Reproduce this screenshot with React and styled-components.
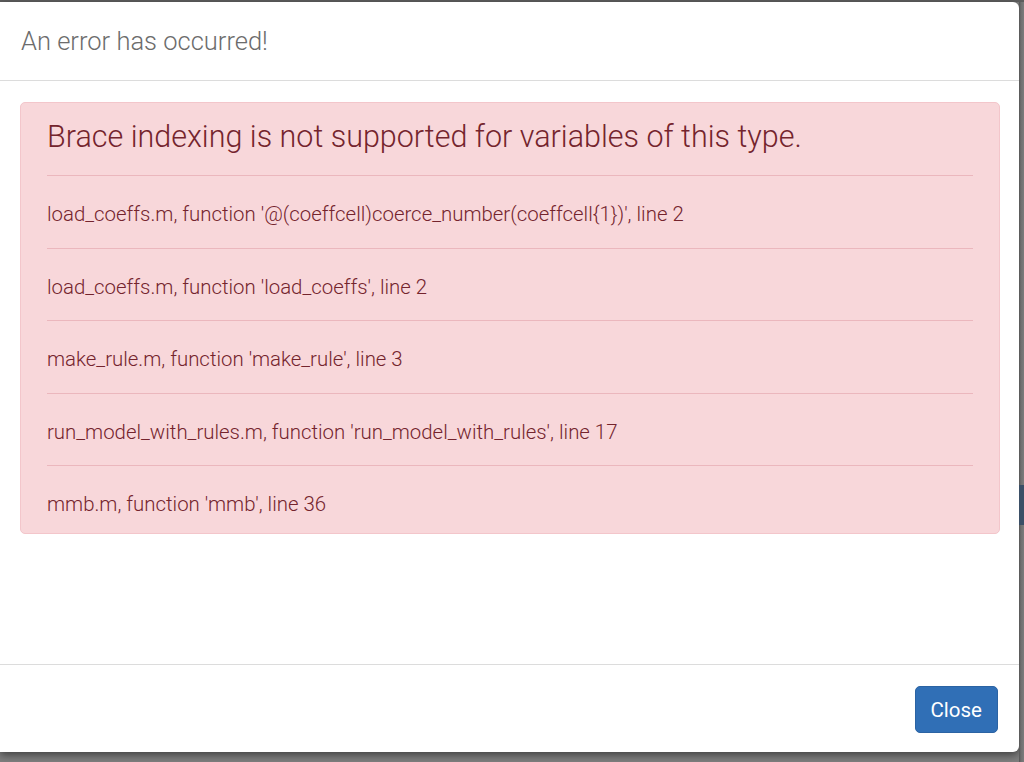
import React from 'react';
import styled, { createGlobalStyle } from 'styled-components';

const GlobalStyle = createGlobalStyle`
  html, body {
    margin: 0;
    padding: 0;
    background: #7f7f7f;
    font-family: Roboto, "Noto Sans", sans-serif;
    overflow: hidden;
  }
`;

const trace = [
  "load_coeffs.m, function '@(coeffcell)coerce_number(coeffcell{1})', line 2",
  "load_coeffs.m, function 'load_coeffs', line 2",
  "make_rule.m, function 'make_rule', line 3",
  "run_model_with_rules.m, function 'run_model_with_rules', line 17",
  "mmb.m, function 'mmb', line 36"
];

const Backdrop = styled.div`
  display: flex;
  width: 1024px;
  height: 762px;
  border-top: 2px solid #5e5e5e;
  box-sizing: border-box;
`;

const Gutter = styled.div`
  flex: 1;
  display: flex;
  flex-direction: column;
  background: linear-gradient(to right, #555 0, #6f6f6f 2px, #7c7c7c 5px);
`;

const BehindBlock = styled.div`
  margin-top: 483px;
  height: 40px;
  background: #3b4f66;
`;

const Modal = styled.div`
  width: 1019px;
  height: 750px;
  background: #fff;
  border-radius: 0 6px 6px 0;
  box-shadow: 0 3px 9px rgba(0, 0, 0, 0.5);
  display: flex;
  flex-direction: column;
`;

const Header = styled.div`
  height: 78px;
  padding: 0 21px;
  display: flex;
  align-items: center;
  border-bottom: 1px solid #dcdcdc;
`;

const Title = styled.h5`
  margin: 0;
  font-size: 25.5px;
  font-weight: 300;
  color: #6c6c6c;
`;

const Body = styled.div`
  flex: 1;
  padding: 21px 19px 0 20px;
`;

const Alert = styled.div`
  background: #f8d7da;
  border: 1px solid #f3c6cb;
  border-radius: 5px;
  color: #74242d;
  padding: 16px 26px 14px;
`;

const AlertHeading = styled.h4`
  margin: 0 0 20px;
  font-size: 30.5px;
  line-height: 36px;
  font-weight: 300;
`;

const TraceLine = styled.p`
  margin: 0;
  border-top: 1px solid #ebb7bd;
  padding: ${p => (p.last ? '24px 0 0' : '24px 0 18.5px')};
  font-size: 20.4px;
  line-height: 29px;
  font-weight: 300;
`;

const Footer = styled.div`
  border-top: 1px solid #dcdcdc;
  padding: 21px 21px 19px;
  display: flex;
  justify-content: flex-end;
`;

const Button = styled.button`
  height: 47px;
  padding: 0 15px;
  background: #306fb6;
  border: 1px solid #2b63a3;
  border-radius: 5px;
  color: #fff;
  font-family: Roboto, "Noto Sans", sans-serif;
  font-size: 20.5px;
  cursor: pointer;
`;

export default function App() {
  return (
    <>
      <GlobalStyle />
      <Backdrop>
        <Modal>
          <Header>
            <Title>An error has occurred!</Title>
          </Header>
          <Body>
            <Alert>
              <AlertHeading>Brace indexing is not supported for variables of this type.</AlertHeading>
              {trace.map((t, i) => (
                <TraceLine key={i} last={i === trace.length - 1}>{t}</TraceLine>
              ))}
            </Alert>
          </Body>
          <Footer>
            <Button>Close</Button>
          </Footer>
        </Modal>
        <Gutter>
          <BehindBlock />
        </Gutter>
      </Backdrop>
    </>
  );
}
